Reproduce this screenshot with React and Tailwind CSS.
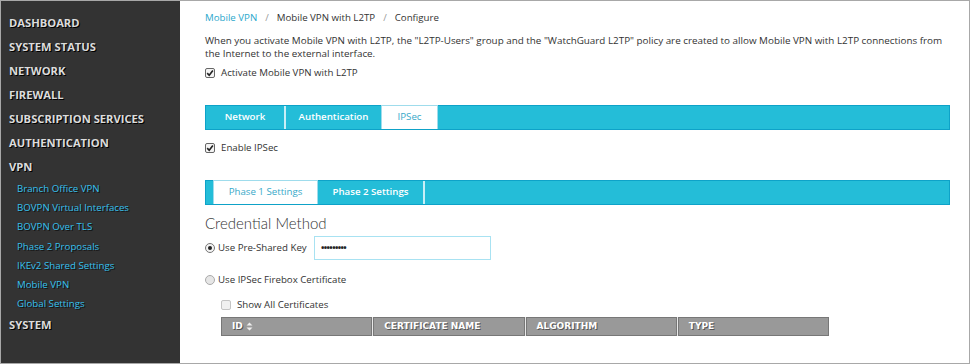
import { useState } from "react"

const mainNav = ["DASHBOARD", "SYSTEM STATUS", "NETWORK", "FIREWALL", "SUBSCRIPTION SERVICES", "AUTHENTICATION", "VPN"]
const vpnNav = [
  "Branch Office VPN",
  "BOVPN Virtual Interfaces",
  "BOVPN Over TLS",
  "Phase 2 Proposals",
  "IKEv2 Shared Settings",
  "Mobile VPN",
  "Global Settings",
]

function Checkbox({ checked, onChange }) {
  return (
    <span
      onClick={onChange}
      className={`flex h-[10px] w-[10px] shrink-0 items-center justify-center rounded-[2px] border ${
        checked ? "border-[#666] bg-[#f4f4f4]" : "border-[#c4c4c4] bg-[#f0f0f0]"
      }`}
    >
      {checked && (
        <svg width="8" height="8" viewBox="0 0 10 10">
          <path d="M1.5 5.2 L4 7.8 L8.6 1.8" fill="none" stroke="#222" strokeWidth="2" />
        </svg>
      )}
    </span>
  )
}

function Radio({ checked, onClick }) {
  return (
    <span
      onClick={onClick}
      className={`flex h-[10px] w-[10px] shrink-0 items-center justify-center rounded-full border ${
        checked ? "border-[#777] bg-[#f4f4f4]" : "border-[#aaa] bg-[#e6e6e6]"
      }`}
    >
      {checked && <span className="h-[4px] w-[4px] rounded-full bg-[#222]" />}
    </span>
  )
}

export default function App() {
  const [activate, setActivate] = useState(true)
  const [ipsec, setIpsec] = useState(true)
  const [method, setMethod] = useState("psk")
  const [showAll, setShowAll] = useState(false)

  return (
    <div
      className="flex h-[364px] w-[970px] border border-[#a8a8a8] bg-white text-[9.7px] text-[#333]"
      style={{ fontFamily: '"Open Sans", "Noto Sans", sans-serif' }}
    >
      <div className="flex w-[179px] shrink-0 flex-col bg-[#333333] pl-[8px] pt-[10px]">
        {mainNav.map((item) => (
          <div
            key={item}
            className="h-[24px] text-[11.2px] font-bold leading-[24px] text-[#dcdcdc] [text-shadow:1px_1px_0_#000]"
          >
            {item}
          </div>
        ))}
        <div className="flex flex-col pl-[8px]">
          {vpnNav.map((item) => (
            <div
              key={item}
              className="h-[19.2px] text-[9.7px] leading-[19.2px] text-[#36c0ee] [text-shadow:1px_1px_0_#111]"
            >
              {item}
            </div>
          ))}
        </div>
        <div className="h-[24px] text-[11.2px] font-bold leading-[24px] text-[#dcdcdc] [text-shadow:1px_1px_0_#000]">
          SYSTEM
        </div>
      </div>

      <div className="flex flex-1 flex-col pl-[25px] pr-[19px] pt-[9px]">
        <div className="flex h-[16px] items-center gap-[8px]">
          <span className="text-[#2aa8cc]">Mobile VPN</span>
          <span className="text-[#999]">/</span>
          <span>Mobile VPN with L2TP</span>
          <span className="text-[#999]">/</span>
          <span>Configure</span>
        </div>
        <p className="mt-[8px] text-[9.85px] leading-[13px]">
          When you activate Mobile VPN with L2TP, the "L2TP-Users" group and the "WatchGuard L2TP" policy are created to allow
          Mobile VPN with L2TP connections from the Internet to the external interface.
        </p>
        <div className="mt-[6px] flex h-[14px] items-center gap-[6px]">
          <Checkbox checked={activate} onChange={() => setActivate(!activate)} />
          <span>Activate Mobile VPN with L2TP</span>
        </div>

        <div className="mt-[25px] flex h-[25px] border border-[#0ea2c8] bg-[#24bdd8]">
          <div className="flex w-[78px] items-center justify-center text-[9.7px] font-semibold text-white">Network</div>
          <div className="w-[2px] bg-[#c8eef6]" />
          <div className="flex w-[95px] items-center justify-center text-[9.7px] font-semibold text-white">
            Authentication
          </div>
          <div className="-mt-[1px] flex w-[57px] items-center justify-center border-x border-t border-[#9fdcec] bg-white text-[#38a9c9]">
            IPSec
          </div>
        </div>

        <div className="mt-[11px] flex h-[14px] items-center gap-[6px]">
          <Checkbox checked={ipsec} onChange={() => setIpsec(!ipsec)} />
          <span>Enable IPSec</span>
        </div>

        <div className="mt-[25px] flex h-[25px] border border-[#0ea2c8] bg-[#24bdd8] pl-[7px]">
          <div className="-mt-[1px] flex w-[105px] items-center justify-center border-x border-t border-[#9fdcec] bg-white text-[#38a9c9]">
            Phase 1 Settings
          </div>
          <div className="flex w-[105px] items-center justify-center text-[9.7px] font-semibold text-white">
            Phase 2 Settings
          </div>
          <div className="w-[2px] bg-[#c8eef6]" />
        </div>

        <div
          className="mt-[7px] text-[15px] font-light leading-[22px] text-[#333]"
          style={{ fontFamily: 'Lato, "Open Sans", sans-serif' }}
        >
          Credential Method
        </div>

        <div className="mt-[2px] flex h-[24px] items-center">
          <div className="flex w-[109px] items-center gap-[3px] whitespace-nowrap">
            <Radio checked={method === "psk"} onClick={() => setMethod("psk")} />
            <span>Use Pre-Shared Key</span>
          </div>
          <div className="flex h-[24px] w-[177px] items-center border border-[#a8e2f2] px-[6px] text-[9px] font-bold tracking-[-0.6px] text-[#222]">
            •••••••••
          </div>
        </div>

        <div className="mt-[12px] flex h-[16px] items-center gap-[3px]">
          <Radio checked={method === "cert"} onClick={() => setMethod("cert")} />
          <span>Use IPSec Firebox Certificate</span>
        </div>

        <div className="ml-[16px] mt-[9px] flex flex-col">
          <div className="flex h-[16px] items-center gap-[6px]">
            <Checkbox checked={showAll} onChange={() => setShowAll(!showAll)} />
            <span>Show All Certificates</span>
          </div>
          <div
            className="mt-[4px] grid h-[19px] w-[608px] grid-cols-4 gap-[1px] bg-[#e8e8e8] text-[9px] font-bold text-white [text-shadow:1px_1px_0_#555]"
            style={{ fontFamily: "Verdana, 'DejaVu Sans', sans-serif" }}
          >
            {["ID", "CERTIFICATE NAME", "ALGORITHM", "TYPE"].map((h, i) => (
              <div key={h} className="flex items-center gap-[3px] border border-[#777] bg-[#999] pl-[10px]">
                <span>{h}</span>
                {i === 0 && (
                  <svg width="7" height="9" viewBox="0 0 7 9">
                    <path d="M0.5 3.6 L3.5 0.6 L6.5 3.6 Z M0.5 5.4 L3.5 8.4 L6.5 5.4 Z" fill="#eee" />
                  </svg>
                )}
              </div>
            ))}
          </div>
        </div>
      </div>
    </div>
  )
}
